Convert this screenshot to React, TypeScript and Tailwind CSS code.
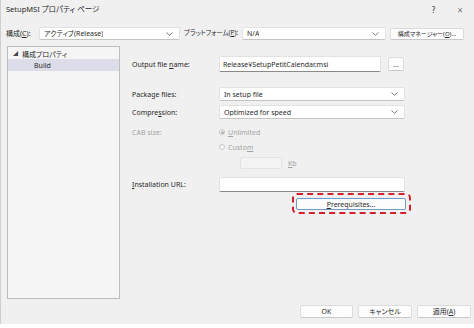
import React from "react";

const font = "font-['Noto_Sans','Noto_Sans_CJK_JP',sans-serif] [font-feature-settings:'palt']";

function Chevron() {
  return (
    <svg width="7" height="4" viewBox="0 0 7 4" className="shrink-0">
      <polyline points="0.5,0.5 3.5,3.3 6.5,0.5" fill="none" stroke="#6b6b6b" strokeWidth="0.9" />
    </svg>
  );
}

function Combo({ value, className }: { value: string; className: string }) {
  return (
    <div
      className={`flex shrink-0 items-center justify-between rounded-[2px] border border-[#e2e2e2] border-b-[#c4c4c4] bg-white pl-[4px] pr-[6px] ${className}`}
    >
      <span className="truncate leading-none">{value}</span>
      <Chevron />
    </div>
  );
}

function Btn({ children, className }: { children: React.ReactNode; className: string }) {
  return (
    <div
      className={`flex shrink-0 items-center justify-center rounded-[2px] border border-[#dcdcdc] border-b-[#c8c8c8] bg-[#fdfdfd] leading-none ${className}`}
    >
      {children}
    </div>
  );
}

function Radio({ checked, label }: { checked?: boolean; label: React.ReactNode }) {
  return (
    <div className="flex h-[12px] items-center gap-[3px] text-[#a3a3a3]">
      <span className="flex h-[6px] w-[6px] items-center justify-center rounded-full border border-[#c6c6c6] bg-[#f6f6f6]">
        {checked && <span className="h-[3px] w-[3px] rounded-full bg-[#b4b4b4]" />}
      </span>
      <span className="leading-none">{label}</span>
    </div>
  );
}

export default function App() {
  return (
    <div className={`h-[328px] w-[474px] overflow-hidden whitespace-nowrap bg-white text-[7px] text-[#2a2a2a] ${font}`}>
      <div className="flex h-[324px] flex-col border-l border-[#cfcfcf] bg-[#f0f0f0]">
        {/* title bar */}
        <div className="flex h-[20px] items-center justify-between pl-[5px] pr-[11px]">
          <span className="text-[7.5px] leading-none">SetupMSI プロパティ ページ</span>
          <div className="flex items-center gap-[22px] text-[8px] text-[#333]">
            <span>?</span>
            <span className="text-[10px] font-light">×</span>
          </div>
        </div>

        {/* configuration row */}
        <div className="mt-[7px] flex h-[13px] items-center pl-[5px]">
          <span className="w-[33px] shrink-0 leading-none">
            構成(<u>C</u>):
          </span>
          <Combo value="アクティブ(Release)" className="h-[13px] w-[141px]" />
          <span className="ml-[4px] w-[58px] shrink-0 text-[6.5px] leading-none">
            プラットフォーム(<u>P</u>):
          </span>
          <Combo value="N/A" className="h-[13px] w-[144px]" />
          <Btn className="ml-[4px] h-[12px] w-[74px] text-[6px]">
            構成マネージャー(<u>O</u>)...
          </Btn>
        </div>

        {/* main */}
        <div className="mt-[6px] flex">
          <div className="ml-[6px] h-[253px] w-[113px] border border-[#bdbdbd] bg-[#f5f5f5] pt-[2px]">
            <div className="flex h-[10px] items-center pl-[5px]">
              <span className="mr-[4px] text-[5px] text-[#444]">◢</span>
              <span className="leading-none">構成プロパティ</span>
            </div>
            <div className="flex h-[12px] items-center bg-[#dcdde9] pl-[26px]">
              <span className="leading-none">Build</span>
            </div>
          </div>

          <div className="ml-[12px] flex flex-col">
            <div className="mt-[10px] flex items-center">
              <span className="w-[87px] leading-none">
                Output file <u>n</u>ame:
              </span>
              <div className="flex h-[16px] w-[162px] items-center rounded-[2px] border border-[#e2e2e2] border-b-[#8a8a8a] bg-white pl-[3px]">
                <span className="leading-none">Release¥SetupPetitCalendar.msi</span>
              </div>
              <Btn className="ml-[7px] h-[14px] w-[16px] text-[#555]">...</Btn>
            </div>

            <div className="mt-[15px] flex items-center">
              <span className="w-[87px] leading-none">Package files:</span>
              <Combo value="In setup file" className="h-[14px] w-[186px]" />
            </div>

            <div className="mt-[4px] flex items-center">
              <span className="w-[87px] leading-none">
                Compre<u>s</u>sion:
              </span>
              <Combo value="Optimized for speed" className="h-[14px] w-[186px]" />
            </div>

            <div className="mt-[7px] flex items-center">
              <span className="w-[87px] leading-none text-[#a3a3a3]">CAB size:</span>
              <Radio
                checked
                label={
                  <>
                    <u>U</u>nlimited
                  </>
                }
              />
            </div>

            <div className="ml-[87px] mt-[3px]">
              <Radio
                label={
                  <>
                    Custo<u>m</u>
                  </>
                }
              />
            </div>

            <div className="ml-[108px] mt-[4px] flex items-center">
              <div className="h-[12px] w-[42px] rounded-[2px] border border-[#e4e4e4] bg-[#f3f3f3]" />
              <span className="ml-[6px] leading-none text-[#a3a3a3]">
                <u>K</u>b
              </span>
            </div>

            <div className="mt-[8px] flex items-center">
              <span className="w-[87px] leading-none">
                <u>I</u>nstallation URL:
              </span>
              <div className="h-[15px] w-[186px] rounded-[2px] border border-[#e2e2e2] border-b-[#8a8a8a] bg-white" />
            </div>

            <div className="ml-[160px] mt-[1px] w-[119px] rounded-[5px] border-2 border-dashed border-[#d3202c] pb-[2px] pl-[2px] pr-[3px] pt-[3px]">
              <div className="flex h-[12px] w-[110px] items-center justify-center rounded-[2px] border border-[#6f9cc7] bg-[#fcfcfc] leading-none">
                <span>
                  <u>P</u>rerequisites...
                </span>
              </div>
            </div>
          </div>
        </div>

        {/* footer */}
        <div className="mt-[6px] flex justify-end gap-[5px] pr-[3px]">
          <Btn className="h-[13px] w-[53px]">OK</Btn>
          <Btn className="h-[13px] w-[54px]">キャンセル</Btn>
          <Btn className="h-[13px] w-[54px]">
            適用(<u>A</u>)
          </Btn>
        </div>
      </div>
    </div>
  );
}
